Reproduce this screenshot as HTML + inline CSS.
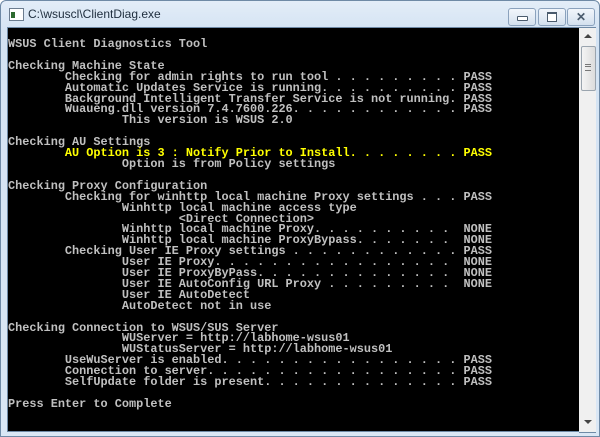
<!DOCTYPE html>
<html><head><meta charset="utf-8"><style>
html,body{margin:0;padding:0;width:600px;height:437px;overflow:hidden;background:#fff}
.win{position:absolute;left:0;top:0;width:598px;height:435px;border:1px solid #6f8aa6;border-radius:6px 6px 0 0;background:linear-gradient(#e3edf8,#d4e3f3 30px,#dae7f5);}
.title{position:absolute;left:27px;top:6px;font:12px "Liberation Sans",sans-serif;color:#1e2d3d}
.ico{position:absolute;left:8px;top:7px;width:13px;height:11px;border:1px solid #6b7c8f;background:#fff}
.ico:before{content:"";position:absolute;left:1px;top:3px;width:4px;height:6px;background:#2d6a2f}
.btn{position:absolute;top:7px;height:16px;border:1px solid #8ba2bd;border-radius:3px;background:linear-gradient(#f2f6fb,#d3e0ee)}
.con{position:absolute;left:6px;top:26px;width:571px;height:403px;background:#000;border:1px solid #6f8aa6;border-right:none}
pre{margin:0;position:absolute;left:0;top:11px;font:bold 11.87px/10.9px "Liberation Mono",monospace;color:#c0c0c0;letter-spacing:0}
.y{color:#ffff00}
.sb{position:absolute;left:578px;top:26px;width:17px;height:404px;background:#f0f0f0;border-top:1px solid #6f8aa6;border-bottom:1px solid #6f8aa6}
.thumb{position:absolute;left:2px;top:18px;width:13px;height:43px;border:1px solid #9aa4ae;border-radius:2px;background:linear-gradient(90deg,#f4f4f4,#dcdcdc)}
</style></head><body>
<div class="win">
<div class="ico"></div>
<div class="title">C:\wsuscl\ClientDiag.exe</div>
<div class="btn" style="left:507px;width:26px"><div style="position:absolute;left:8px;top:7px;width:9px;height:3px;border:1px solid #4a5b6d;border-radius:1px;background:#fff"></div></div>
<div class="btn" style="left:537px;width:26px"><div style="position:absolute;left:8px;top:3px;width:8px;height:7px;border:1px solid #4a5b6d;border-top-width:2px;background:#fff"></div></div>
<div class="btn" style="left:566px;width:26px;"><div style="position:absolute;left:0;top:0;width:26px;text-align:center;font:bold 12px/16px 'Liberation Sans',sans-serif;color:#4a5b6d">✕</div></div>
<div class="con"><pre>WSUS Client Diagnostics Tool

Checking Machine State
        Checking for admin rights to run tool . . . . . . . . . PASS
        Automatic Updates Service is running. . . . . . . . . . PASS
        Background Intelligent Transfer Service is not running. PASS
        Wuaueng.dll version 7.4.7600.226. . . . . . . . . . . . PASS
                This version is WSUS 2.0

Checking AU Settings
<span class="y">        AU Option is 3 : Notify Prior to Install. . . . . . . . PASS</span>
                Option is from Policy settings

Checking Proxy Configuration
        Checking for winhttp local machine Proxy settings . . . PASS
                Winhttp local machine access type
                        &lt;Direct Connection&gt;
                Winhttp local machine Proxy. . . . . . . . . .  NONE
                Winhttp local machine ProxyBypass. . . . . . .  NONE
        Checking User IE Proxy settings . . . . . . . . . . . . PASS
                User IE Proxy. . . . . . . . . . . . . . . . .  NONE
                User IE ProxyByPass. . . . . . . . . . . . . .  NONE
                User IE AutoConfig URL Proxy . . . . . . . . .  NONE
                User IE AutoDetect
                AutoDetect not in use

Checking Connection to WSUS/SUS Server
                WUServer = http://labhome-wsus01
                WUStatusServer = http://labhome-wsus01
        UseWuServer is enabled. . . . . . . . . . . . . . . . . PASS
        Connection to server. . . . . . . . . . . . . . . . . . PASS
        SelfUpdate folder is present. . . . . . . . . . . . . . PASS

Press Enter to Complete</pre></div>
<div class="sb">
<div style="position:absolute;left:5px;top:6px;width:0;height:0;border-left:4px solid transparent;border-right:4px solid transparent;border-bottom:4px solid #444"></div>
<div class="thumb"><div style="position:absolute;left:3px;top:17px;width:6px;height:5px;border-top:1px solid #777;border-bottom:1px solid #777"></div><div style="position:absolute;left:3px;top:19px;width:6px;height:1px;background:#777"></div></div>
<div style="position:absolute;left:5px;bottom:8px;width:0;height:0;border-left:4px solid transparent;border-right:4px solid transparent;border-top:4px solid #444"></div>
</div>
</div>
</body></html>
